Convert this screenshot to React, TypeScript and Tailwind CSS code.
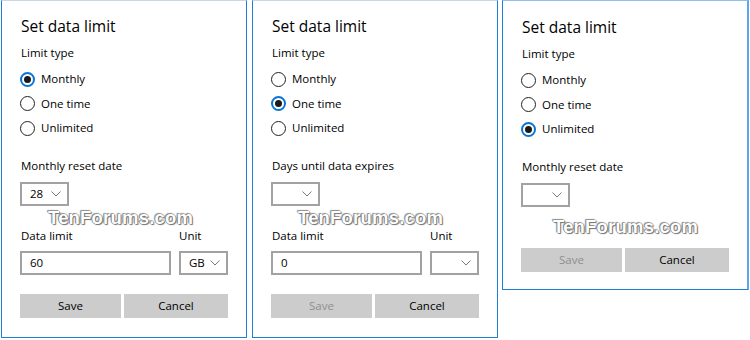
import React from "react";

const FONT = "font-['Open_Sans','Noto_Sans',sans-serif]";

function Radio({ label, checked }: { label: string; checked?: boolean }) {
  return (
    <div className="flex h-[24.5px] items-center">
      <div
        className={
          "flex h-[15px] w-[15px] items-center justify-center rounded-full " +
          (checked ? "border-2 border-[#0a74d6]" : "border-[1.6px] border-[#222]")
        }
      >
        {checked && <div className="h-[7px] w-[7px] rounded-full bg-[#1a1a1a]" />}
      </div>
      <span className="ml-[6px] text-[11.5px] leading-[16px] text-black">{label}</span>
    </div>
  );
}

function Chevron() {
  return (
    <svg width="10" height="6" viewBox="0 0 10 6" className="shrink-0">
      <path d="M0.5 0.5 L5 5 L9.5 0.5" fill="none" stroke="#7a7a7a" strokeWidth="1" />
    </svg>
  );
}

function Dropdown({ value, width }: { value?: string; width: string }) {
  return (
    <div
      className={
        "flex h-[24px] items-center justify-between border-2 border-[#a2a2a2] bg-white pl-[8px] pr-[6px] " +
        width
      }
    >
      <span className="text-[11.5px] leading-[16px] text-black">{value ?? ""}</span>
      <Chevron />
    </div>
  );
}

function Watermark({ className }: { className: string }) {
  return (
    <div
      className={
        "pointer-events-none absolute font-['Liberation_Sans',Arial,sans-serif] text-[18.5px] font-bold leading-[20px] tracking-[0.2px] text-white [text-shadow:0_0_1px_#5f5f5f,0_0_1px_#5f5f5f,1px_1px_1px_#777,-1px_-1px_1px_#999] " +
        className
      }
    >
      TenForums.com
    </div>
  );
}

function Buttons({ saveDisabled }: { saveDisabled?: boolean }) {
  return (
    <div className="flex gap-[3px]">
      <div
        className={
          "flex h-[24px] w-[101px] items-center justify-center bg-[#cccccc] text-[11.5px] " +
          (saveDisabled ? "text-[#8f8f8f]" : "text-black")
        }
      >
        Save
      </div>
      <div className="flex h-[24px] w-[104px] items-center justify-center bg-[#cccccc] text-[11.5px] text-black">
        Cancel
      </div>
    </div>
  );
}

function Header({ selected }: { selected: number }) {
  return (
    <>
      <div className="pl-[1px] text-[15.5px] leading-[20px] text-black">Set data limit</div>
      <div className="mt-[9px] pl-[1px] text-[11.5px] leading-[16px] text-black">Limit type</div>
      <div className="mt-[6px]">
        <Radio label="Monthly" checked={selected === 0} />
        <Radio label="One time" checked={selected === 1} />
        <Radio label="Unlimited" checked={selected === 2} />
      </div>
    </>
  );
}

function FullPanel({
  selected,
  dateLabel,
  dateValue,
  limit,
  unit,
  saveDisabled,
  wmClass,
}: {
  selected: number;
  dateLabel: string;
  dateValue?: string;
  limit: string;
  unit?: string;
  saveDisabled?: boolean;
  wmClass: string;
}) {
  return (
    <div className="relative box-border h-[338px] w-[246px] border-x border-b border-t border-x-[#1d7fd8] border-b-[#1d7fd8] border-t-[#c9d6e3] bg-white pl-[18px] pr-[17px] pt-[15px]">
      <Header selected={selected} />
      <div className="mt-[17px] pl-[1px] text-[11.5px] leading-[16px] text-black">{dateLabel}</div>
      <div className="mt-[8px]">
        <Dropdown value={dateValue} width="w-[49px]" />
      </div>
      <div className="mt-[22px] flex w-[208px] justify-between text-[11.5px] leading-[16px] text-black">
        <span className="pl-[1px]">Data limit</span>
        <span className="w-[49px]">Unit</span>
      </div>
      <div className="mt-[7px] flex w-[208px] justify-between">
        <div className="flex h-[24px] w-[151px] items-center border-2 border-[#a2a2a2] pl-[8px] text-[11.5px] text-black">
          {limit}
        </div>
        <Dropdown value={unit} width="w-[49px]" />
      </div>
      <div className="mt-[19px]">
        <Buttons saveDisabled={saveDisabled} />
      </div>
      <Watermark className={wmClass} />
    </div>
  );
}

export default function App() {
  return (
    <div className={"flex h-[340px] w-[750px] items-start bg-white pl-[1px] text-black " + FONT}>
      <FullPanel
        selected={0}
        dateLabel="Monthly reset date"
        dateValue="28"
        limit="60"
        unit="GB"
        wmClass="left-[46px] top-[207px]"
      />
      <div className="ml-[5px]">
        <FullPanel
          selected={1}
          dateLabel="Days until data expires"
          limit="0"
          saveDisabled
          wmClass="left-[45px] top-[207px]"
        />
      </div>
      <div className="ml-[4px]">
        <div className="relative box-border h-[290px] w-[247px] border-b border-l border-r-2 border-t border-b-[#1d7fd8] border-l-[#1d7fd8] border-r-[#5aa8ee] border-t-[#8fbfec] bg-white pl-[18px] pr-[17px] pt-[16px]">
          <Header selected={2} />
          <div className="mt-[17px] pl-[1px] text-[11.5px] leading-[16px] text-black">Monthly reset date</div>
          <div className="mt-[8px]">
            <Dropdown width="w-[49px]" />
          </div>
          <div className="mt-[41px]">
            <Buttons saveDisabled />
          </div>
          <Watermark className="left-[50px] top-[216px]" />
        </div>
      </div>
    </div>
  );
}
